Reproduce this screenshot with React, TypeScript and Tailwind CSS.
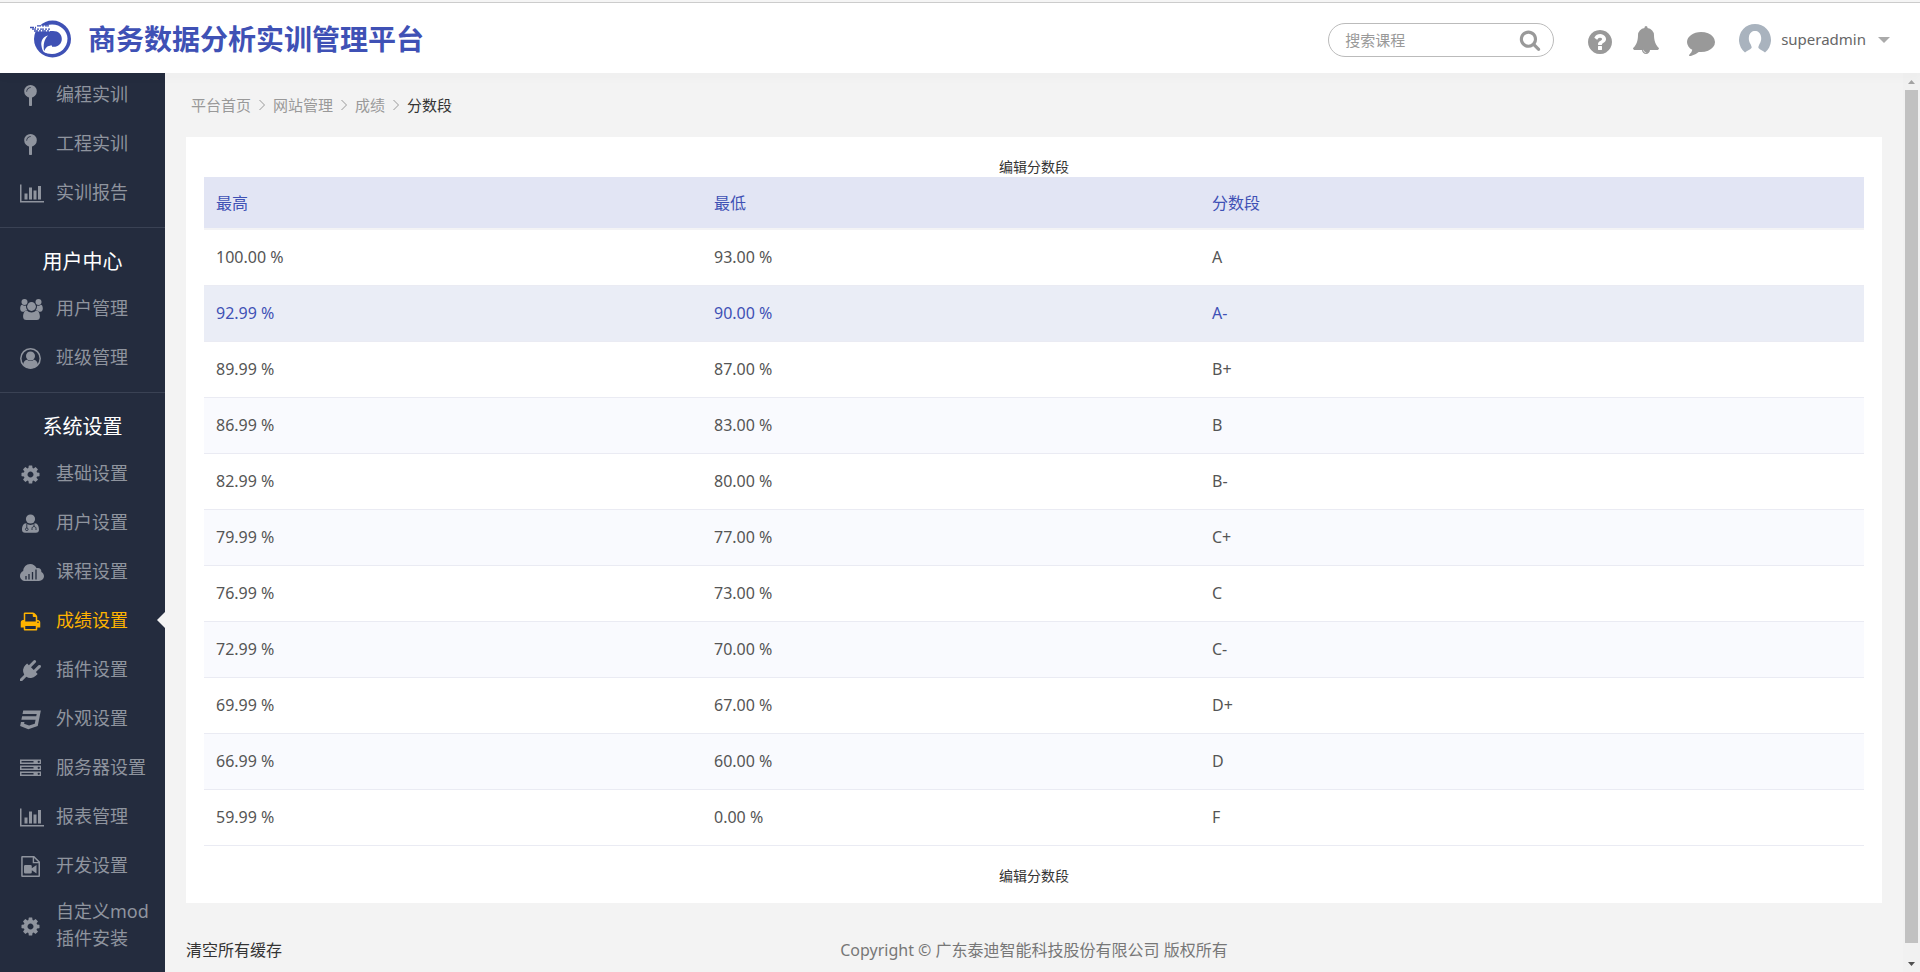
import type { ReactNode } from "react"

interface IconProps {
  children: ReactNode
  viewBox?: string
  className?: string
}

const Icon = ({ children, viewBox = "0 0 1792 1792", className = "w-[21px] h-[21px]" }: IconProps) => (
  <svg viewBox={viewBox} fill="currentColor" className={`shrink-0 ${className}`} aria-hidden="true">
    {children}
  </svg>
)

const PinIcon = () => (
  <Icon>
    <path d="M768 960h256v768q0 64-64 64H832q-64 0-64-64z" />
    <path
      fillRule="evenodd"
      d="M896 0a540 540 0 1 1 0 1080A540 540 0 0 1 896 0zm0 192q-146 0-249 103T544 544q0 32 32 32t32-32q0-119 84.500-203.500T896 256q32 0 32-32t-32-32z"
    />
  </Icon>
)

const ChartIcon = () => (
  <Icon viewBox="0 0 2048 1792" className="h-[21px] w-6">
    <path d="M640 896v512H384V896h256zm384-512v1024H768V384h256zm1024 1152v128H0V128h128v1408h1920zm-640-896v768h-256V640h256zm384-384v1152h-256V256h256z" />
  </Icon>
)

const UsersIcon = () => (
  <Icon viewBox="0 0 23 21" className="h-[21px] w-[23px]">
    <circle cx="4.500" cy="3" r="3" />
    <circle cx="18.500" cy="3" r="3" />
    <path d="M.2 9.500C.2 7 1 5.700 2.200 5.700c.6.600 1.500 1 2.300 1q.8 0 1.500-.3c0 2 .3 3.600 1.600 4.800-1.600 0-2.800.6-3.600 1.500H2.500C1 12.700.2 11.500.2 9.500z" />
    <path d="M22.800 9.500c0-2.500-.8-3.800-2-3.800-.6.600-1.500 1-2.300 1q-.8 0-1.500-.3c0 2-.3 3.600-1.600 4.800 1.600 0 2.800.6 3.600 1.500h1.500c1.500 0 2.300-1.200 2.300-3.200z" />
    <circle cx="11.500" cy="7.500" r="4.400" />
    <path d="M6.800 11.500c1.300 1.200 2.900 1.900 4.700 1.900s3.400-.7 4.700-1.900c2.600.2 3.700 3 3.700 6.200 0 2-1.200 3.300-3.200 3.300H6.300c-2 0-3.200-1.300-3.200-3.300 0-3.200 1.100-6 3.700-6.200z" />
  </Icon>
)

const UserCircleIcon = () => (
  <Icon viewBox="0 0 21 21">
    <circle cx="10.500" cy="10.500" r="9.700" fill="none" stroke="currentColor" strokeWidth="1.500" />
    <circle cx="10.500" cy="8" r="4.500" />
    <path d="M7 11.800c1 .8 2.200 1.200 3.500 1.200s2.500-.4 3.500-1.200c2.200.2 3.300 2 3.800 4.600-1.700 2.500-4.400 3.900-7.300 3.900s-5.600-1.400-7.300-3.900c.5-2.600 1.600-4.400 3.800-4.600z" />
  </Icon>
)

const CogIcon = () => (
  <Icon>
    <path d="M1152 896q0-106-75-181t-181-75-181 75-75 181 75 181 181 75 181-75 75-181zm512-109v222q0 12-8 23t-20 13l-185 28q-19 54-39 91 35 50 107 138 10 12 10 25t-9 23q-27 37-99 108t-94 71q-12 0-26-9l-138-108q-44 23-91 38-16 136-29 186-7 28-36 28h-222q-14 0-24.500-8.500t-11.500-21.500l-28-184q-49-16-90-37l-141 107q-10 9-25 9-14 0-25-11-126-114-165-168-7-10-7-23 0-12 8-23 15-21 51-66.500t54-70.500q-27-50-41-99l-183-27q-13-2-21-12.500t-8-23.500v-222q0-12 8-23t19-13l186-28q14-46 39-92-40-57-107-138-10-12-10-24 0-10 9-23 26-36 98.500-107.500t94.500-71.500q13 0 26 10l138 107q44-23 91-38 16-136 29-186 7-28 36-28h222q14 0 24.500 8.500t11.500 21.500l28 184q49 16 90 37l142-107q9-9 24-9 13 0 25 10 129 119 165 170 7 8 7 22 0 12-8 23-15 21-51 66.500t-54 70.500q26 50 41 98l183 28q13 2 21 12.500t8 23.500z" />
  </Icon>
)

const UserMdIcon = () => (
  <Icon viewBox="0 0 21 21">
    <circle cx="10.500" cy="6" r="4.600" />
    <path d="M6 10.300c2.700 2.300 6.300 2.300 9 0 2.700.2 4 3 4 6.400 0 1.800-1.200 3-3 3H5c-1.800 0-3-1.200-3-3 0-3.400 1.300-6.200 4-6.400z" />
    <g fill="none" stroke="#242c3e" strokeWidth="0.900">
      <path d="M6.800 11v4M12 17v-1.500c0-2.600 4-2.600 4 0V17M14 13.500v-2.300" />
      <circle cx="6.800" cy="16.300" r="1.300" />
    </g>
  </Icon>
)

const CloudIcon = () => (
  <Icon viewBox="0 0 24 21" className="h-[21px] w-6">
    <path d="M5.500 19C2.400 19 0 16.700 0 13.900c0-2.200 1.300-4 3.200-4.800C3.300 5.200 6.300 2 10.200 2c2.900 0 5.300 1.700 6.400 4.200 2.600-.9 5 .9 4.800 3.700 1.600.8 2.600 2.400 2.600 4.200 0 2.800-2.200 4.900-5 4.900z" />
    <path d="M6 14v3.500M9 12v5.500M12.500 10v7.500M16 7.500v10" fill="none" stroke="#242c3e" strokeWidth="1.300" />
  </Icon>
)

const PrintIcon = () => (
  <Icon>
    <path d="M448 1536h896v-256h-896v256zm0-640h896v-384h-160q-40 0-68-28t-28-68v-160h-640v640zm1152 64q0-26-19-45t-45-19-45 19-19 45 19 45 45 19 45-19 19-45zm128 0v416q0 13-9.500 22.500t-22.500 9.500h-224v160q0 40-28 68t-68 28h-960q-40 0-68-28t-28-68v-160h-224q-13 0-22.500-9.500t-9.500-22.500v-416q0-79 56.500-135.500t135.500-56.500h64v-544q0-40 28-68t68-28h672q40 0 88 20t76 48l152 152q28 28 48 76t20 88v256h64q79 0 135.500 56.500t56.500 135.500z" />
  </Icon>
)

const PlugIcon = () => (
  <Icon>
    <path d="M1755 453q37 38 37 90.500t-37 90.500l-401 400 150 150-160 160q-163 163-389.500 186.500t-411.500-100.500l-362 362h-181v-181l362-362q-124-185-100.500-411.500t186.500-389.500l160-160 150 150 400-401q38-37 91-37t90 37 37 90.500-37 90.500l-400 401 234 234 401-400q38-37 91-37t90 37z" />
  </Icon>
)

const CssIcon = () => (
  <Icon>
    <path d="M275 128h1505l-266 1333-804 267-698-267 71-356h297l-29 147 422 161 486-161 68-339h-1208l58-297h1209l38-191h-1208z" />
  </Icon>
)

const ServerIcon = () => (
  <Icon>
    <path d="M128 1408h1024v-128h-1024v128zm0-512h1024v-128h-1024v128zm1568 448q0-40-28-68t-68-28-68 28-28 68 28 68 68 28 68-28 28-68zm-1568-960h1024v-128h-1024v128zm1568 448q0-40-28-68t-68-28-68 28-28 68 28 68 68 28 68-28 28-68zm0-512q0-40-28-68t-68-28-68 28-28 68 28 68 68 28 68-28 28-68zm96 832v384h-1792v-384h1792zm0-512v384h-1792v-384h1792zm0-512v384h-1792v-384h1792z" />
  </Icon>
)

const FileVideoIcon = () => (
  <Icon viewBox="0 0 21 21">
    <path
      fillRule="evenodd"
      d="M2.200 0h12L20 5.800V20q0 1-1 1H2.200q-1 0-1-1V1q0-1 1-1zm.5 1.500v18h15.800V7.300h-5.800V1.500zm11.400.4v4h4z"
    />
    <path d="M5.300 9h5.200q1.300 0 1.300 1.300v1.900L16.500 9v8.500l-4.700-3.200v2q0 1.300-1.300 1.300H5.300Q4 17.600 4 16.300v-6Q4 9 5.300 9z" />
  </Icon>
)

const Logo = () => (
  <svg viewBox="0 0 42 38" className="h-[38px] w-[42px] shrink-0" aria-hidden="true">
    <circle cx="22.500" cy="19" r="18.500" fill="#3f51b5" />
    <path d="M16 5.500C27 1.500 37.500 9 37.500 18.500c0 9-7 15.500-15.500 15.500-3.500 0-6-.8-8-2.200l2-26z" fill="#fff" />
    <path
      d="M9 11h14c5.500 0 8.800 3.500 8.800 8s-3.300 7.800-8.300 7.800c-4 0-5.500 1.500-7 5.200L7 26z"
      fill="#3f51b5"
    />
    <path d="M18 15.500c-4.500 1-7.500 5-6.500 10.500.4 3 1.300 5 2.700 6.300-.7-4.300-.7-7.300 0-10 .6-2.600 1.800-4.800 3.800-6.800z" fill="#fff" />
    <path d="M14 32c1.500-4.500 3.500-6.500 8-6.500v3c-3 0-4.500 1.500-5.500 4.500z" fill="#fff" />
    <path d="M0 5.500h20v6H5z" fill="#fff" />
    <path d="M0 7.500h6M2 9.200h18M4 11h15M7 5.800h12" stroke="#3f51b5" strokeWidth="1.300" strokeDasharray="4 1 2 1" />
  </svg>
)

interface NavItem {
  label: ReactNode
  key: string
  icon: ReactNode
  active?: boolean
}

interface NavGroup {
  title?: string
  items: NavItem[]
}

const navGroups: NavGroup[] = [
  {
    items: [
      { key: "code", label: "编程实训", icon: <PinIcon /> },
      { key: "project", label: "工程实训", icon: <PinIcon /> },
      { key: "report", label: "实训报告", icon: <ChartIcon /> },
    ],
  },
  {
    title: "用户中心",
    items: [
      { key: "users", label: "用户管理", icon: <UsersIcon /> },
      { key: "classes", label: "班级管理", icon: <UserCircleIcon /> },
    ],
  },
  {
    title: "系统设置",
    items: [
      { key: "basic", label: "基础设置", icon: <CogIcon /> },
      { key: "user", label: "用户设置", icon: <UserMdIcon /> },
      { key: "course", label: "课程设置", icon: <CloudIcon /> },
      { key: "grade", label: "成绩设置", icon: <PrintIcon />, active: true },
      { key: "plugin", label: "插件设置", icon: <PlugIcon /> },
      { key: "theme", label: "外观设置", icon: <CssIcon /> },
      { key: "server", label: "服务器设置", icon: <ServerIcon /> },
      { key: "reports", label: "报表管理", icon: <ChartIcon /> },
      { key: "dev", label: "开发设置", icon: <FileVideoIcon /> },
    ],
  },
]

const letters = [
  { max: "100.00 %", min: "93.00 %", letter: "A" },
  { max: "92.99 %", min: "90.00 %", letter: "A-" },
  { max: "89.99 %", min: "87.00 %", letter: "B+" },
  { max: "86.99 %", min: "83.00 %", letter: "B" },
  { max: "82.99 %", min: "80.00 %", letter: "B-" },
  { max: "79.99 %", min: "77.00 %", letter: "C+" },
  { max: "76.99 %", min: "73.00 %", letter: "C" },
  { max: "72.99 %", min: "70.00 %", letter: "C-" },
  { max: "69.99 %", min: "67.00 %", letter: "D+" },
  { max: "66.99 %", min: "60.00 %", letter: "D" },
  { max: "59.99 %", min: "0.00 %", letter: "F" },
]

const Header = () => (
  <header className="relative z-10 flex h-[73px] shrink-0 items-center border-t-2 border-[#f5f5f5] bg-white shadow-[0_7px_7px_rgba(0,0,0,0.015)]">
    <div className="flex h-full flex-1 items-center border-t border-[#cccccc] px-[30px] pt-1">
      <a href="#" className="flex items-center gap-4 pb-0.5">
        <Logo />
        <h1 className="text-[28px] leading-9 font-bold text-[#3f51b5]">商务数据分析实训管理平台</h1>
      </a>
      <form className="ml-auto flex h-[34px] w-[226px] items-center rounded-full border border-[#bbbbbb] pr-3 pl-4">
        <input
          type="text"
          aria-label="搜索课程"
          placeholder="搜索课程"
          className="min-w-0 flex-1 text-[15px] outline-none placeholder:text-[#999999]"
        />
        <button type="button" aria-label="搜索" className="text-[#999999]">
          <Icon className="h-[22px] w-[22px]">
            <path d="M1216 832q0-185-131.500-316.500t-316.500-131.500-316.500 131.500-131.500 316.500 131.500 316.500 316.500 131.500 316.500-131.500 131.500-316.500zm512 832q0 52-38 90t-90 38q-54 0-90-38l-343-342q-179 124-399 124-143 0-273.500-55.500t-225-150-150-225-55.500-273.500 55.500-273.500 150-225 225-150 273.500-55.500 273.500 55.500 225 150 150 225 55.500 273.500q0 220-124 399l343 343q37 37 37 90z" />
          </Icon>
        </button>
      </form>
      <div className="ml-8 flex items-center pt-1 text-[#999999]">
        <button type="button" aria-label="帮助">
          <Icon className="h-7 w-7">
            <path d="M1024 1376v-192q0-14-9-23t-23-9h-192q-14 0-23 9t-9 23v192q0 14 9 23t23 9h192q14 0 23-9t9-23zm256-672q0-88-55.500-163t-138.500-116-170-41q-243 0-371 213-15 24 8 42l132 100q7 6 19 6 16 0 25-12 53-68 86-92 34-24 86-24 48 0 85.500 26t37.500 59q0 38-20 61t-68 45q-63 28-115.500 86.500t-52.500 125.500v36q0 14 9 23t23 9h192q14 0 23-9t9-23q0-19 21.500-49.500t54.500-49.500q32-18 49-28.500t46-35 44.500-48 28-60.500 12.500-81zm384 192q0 209-103 385.500t-279.500 279.500-385.500 103-385.500-103-279.500-279.500-103-385.500 103-385.500 279.500-279.500 385.500-103 385.500 103 279.500 279.500 103 385.500z" />
          </Icon>
        </button>
        <button type="button" aria-label="通知" className="ml-[18px] pb-1">
          <Icon className="h-7 w-7">
            <path d="M912 1696q0-16-16-16-59 0-101.500-42.500t-42.500-101.500q0-16-16-16t-16 16q0 73 51.500 124.500t124.500 51.500q16 0 16-16zm816-288q0 52-38 90t-90 38h-448q0 106-75 181t-181 75-181-75-75-181h-448q-52 0-90-38t-38-90q50-42 91-88t85-119.500 74.500-158.500 50-206 19.500-260q0-152 117-282.500t307-158.500q-8-19-8-39 0-40 28-68t68-28 68 28 28 68q0 20-8 39 190 28 307 158.500t117 282.500q0 139 19.500 260t50 206 74.500 158.500 85 119.500 91 88z" />
          </Icon>
        </button>
        <button type="button" aria-label="消息" className="ml-[27px]">
          <Icon className="h-7 w-7">
            <path d="M1792 896q0 174-120 321.500t-326 233-450 85.500q-70 0-145-8-198 175-460 242-49 14-114 22-17 2-30.500-9t-17.500-29v-1q-3-4-.5-12t2-10 4.500-9.500l6-9 7-8.500 8-9q7-8 31-34.500t34.500-38 31-39.500 32.500-51 27-59 26-76q-157-89-247.500-220t-90.500-281q0-130 71-248.500t191-204.500 286-136.500 348-50.500q244 0 450 85.500t326 233 120 321.500z" />
          </Icon>
        </button>
      </div>
      <button type="button" className="ml-6 flex items-center text-[15px] text-[#666666]">
        <svg viewBox="0 0 32 32" className="h-8 w-8" aria-hidden="true">
          <path
            d="M6 28.500A16 16 0 1 1 26 28.500C24 26.500 21 26 19.500 24c-.5-1.500.5-2.500 1-4 1.500-2.500 2-5 1.500-7.500C21.500 9 19 7 16 7s-5.500 2-6 5.500c-.5 2.500 0 5 1.500 7.500.5 1.500 1.500 2.500 1 4C11 26 8 26.500 6 28.500z"
            fill="#a9b3be"
          />
        </svg>
        <span className="ml-2.5 pb-0.5">superadmin</span>
        <svg viewBox="0 0 12 6" className="ml-3 h-1.5 w-3" aria-hidden="true">
          <path d="M0 0h12L6 6z" fill="#aaaaaa" />
        </svg>
      </button>
    </div>
  </header>
)

const NavLink = ({ item }: { item: NavItem }) => (
  <li className="relative">
    <a
      href="#"
      className={`flex h-[49px] items-center pl-5 ${item.active ? "text-[#ffb300]" : "text-[#8f949e]"}`}
    >
      <span className="flex w-9 shrink-0 pt-0.5">{item.icon}</span>
      <span className="leading-[27px]">{item.label}</span>
    </a>
    {item.active && (
      <span className="absolute top-4 right-0 border-y-8 border-r-8 border-y-transparent border-r-[#f3f3f3]" />
    )}
  </li>
)

const Sidebar = () => (
  <nav className="w-[165px] shrink-0 overflow-hidden bg-[#242c3e] text-[18px]">
    {navGroups.map((group, index) => (
      <section key={index} className={index === 0 ? "-mt-[3px]" : "border-t border-[#3a4254]"}>
        {group.title && (
          <h2 className="flex h-14 items-center justify-center pt-3 text-[20px] text-white">
            {group.title}
          </h2>
        )}
        <ul className={index < 2 ? "pb-2.5" : ""}>
          {group.items.map((item) => (
            <NavLink key={item.key} item={item} />
          ))}
          {index === 2 && (
            <li>
              <a href="#" className="flex items-center py-2 pl-5 text-[#8f949e]">
                <span className="w-9 shrink-0 pt-0.5">
                  <CogIcon />
                </span>
                <span className="leading-[27px]">
                  自定义mod
                  <br />
                  插件安装
                </span>
              </a>
            </li>
          )}
        </ul>
      </section>
    ))}
  </nav>
)

const crumbs = ["平台首页", "网站管理", "成绩"]

const Breadcrumb = () => (
  <ol className="flex h-16 items-center pl-[5px] text-[15px] text-[#999999]">
    {crumbs.map((crumb) => (
      <li key={crumb} className="flex items-center">
        <a href="#">{crumb}</a>
        <svg viewBox="0 0 6 12" className="mx-2 h-3 w-1.5" fill="none" stroke="#999999" aria-hidden="true">
          <path d="M.5 1l5 5-5 5" />
        </svg>
      </li>
    ))}
    <li className="text-[#333333]">分数段</li>
  </ol>
)

const LetterTable = () => (
  <table className="w-full table-fixed text-left text-[16px] text-[#555555]">
    <thead>
      <tr className="h-[52px] border-b-2 border-[#f3f3f5] bg-[#e2e5f4] text-[#3f51b5]">
        <th className="w-[30%] px-3 font-normal">最高</th>
        <th className="w-[30%] px-3 font-normal">最低</th>
        <th className="w-[40%] px-3 font-normal">分数段</th>
      </tr>
    </thead>
    <tbody>
      {letters.map((row, index) => (
        <tr
          key={row.letter}
          className={`h-14 border-b border-[#eaebf3] ${
            index === 1 ? "bg-[#eaedf6] text-[#3f51b5]" : index % 2 === 1 ? "bg-[#f9fafe]" : ""
          }`}
        >
          <td className="px-3">{row.max}</td>
          <td className="px-3">{row.min}</td>
          <td className="px-3">{row.letter}</td>
        </tr>
      ))}
    </tbody>
  </table>
)

const Scrollbar = () => (
  <div className="flex w-[17px] shrink-0 flex-col items-center bg-[#f1f1f1]" aria-hidden="true">
    <svg viewBox="0 0 17 17" className="h-[17px] w-[17px] shrink-0">
      <path d="M5 11l3.500-4 3.500 4z" fill="#a3a3a3" />
    </svg>
    <div className="mb-3 w-[13px] flex-1 bg-[#c1c1c1]" />
    <svg viewBox="0 0 17 17" className="h-[17px] w-[17px] shrink-0">
      <path d="M5 7h7l-3.500 4z" fill="#505050" />
    </svg>
  </div>
)

export default function App() {
  return (
    <div className="flex h-screen flex-col overflow-hidden bg-[#f3f3f3] font-['Noto_Sans','Noto_Sans_CJK_SC',sans-serif]">
      <Header />
      <div className="flex min-h-0 flex-1">
        <Sidebar />
        <main className="min-w-0 flex-1 overflow-hidden px-[21px]">
          <Breadcrumb />
          <div className="bg-white px-[18px] pt-5 pb-[17px] text-center text-[14px] text-[#333333]">
            <a href="#" className="block leading-5">
              编辑分数段
            </a>
            <LetterTable />
            <a href="#" className="mt-5 block leading-5">
              编辑分数段
            </a>
          </div>
          <footer className="relative flex justify-center pt-[35px] text-[16px] leading-6 text-[#777777]">
            <a href="#" className="absolute left-0 text-[#333333]">
              清空所有缓存
            </a>
            <p>Copyright © 广东泰迪智能科技股份有限公司 版权所有</p>
          </footer>
        </main>
        <Scrollbar />
      </div>
    </div>
  )
}
